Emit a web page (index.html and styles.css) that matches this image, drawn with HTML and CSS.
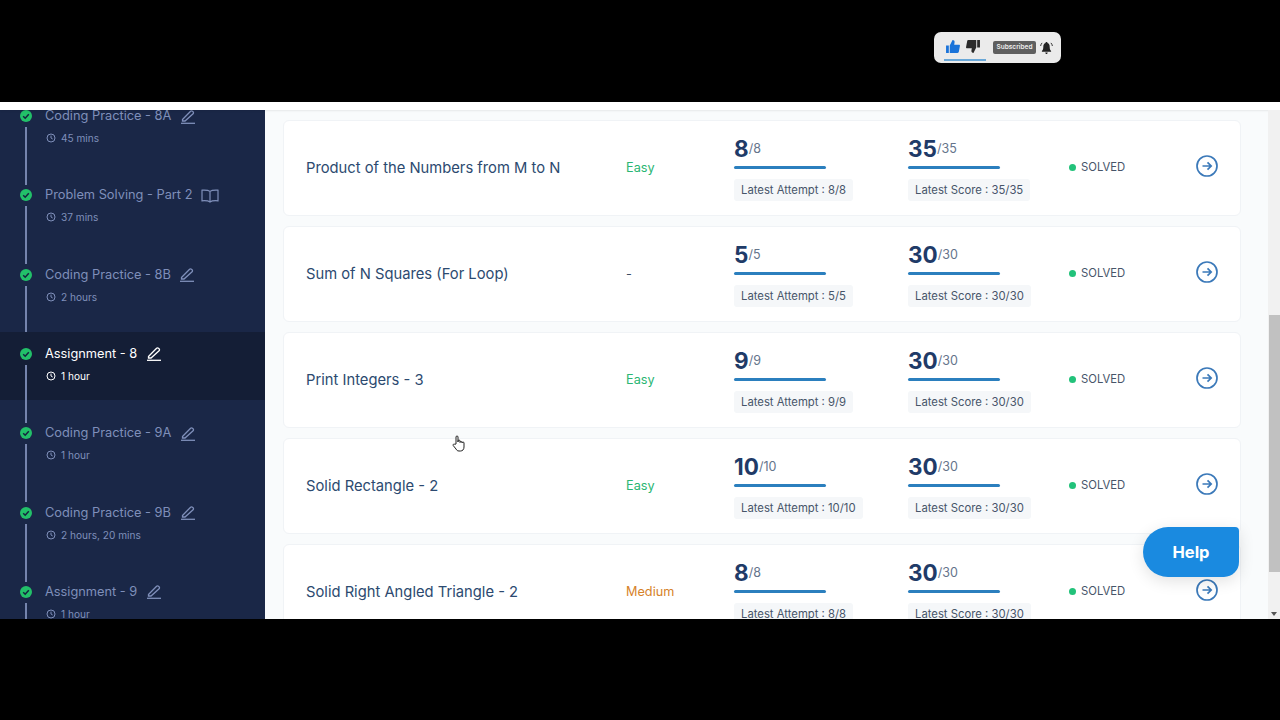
FILE: index.html
```html
<!DOCTYPE html>
<html lang="en">
<head>
    <meta charset="UTF-8">
    <title>Assignment - 8</title>
    <link rel="stylesheet" href="styles.css">
</head>
<body>
    <svg class="icon-defs" width="0" height="0">
        <symbol id="i-check" viewBox="0 0 12 12">
            <circle cx="6" cy="6" r="6" fill="#22c069"/>
            <path d="M3.2 6.2l2 2 3.6-4" fill="none" stroke="#14233f" stroke-width="1.5"/>
        </symbol>
        <symbol id="i-clock" viewBox="0 0 10 10">
            <circle cx="5" cy="5" r="4" fill="none" stroke="currentColor" stroke-width="1"/>
            <path d="M5 2.6V5l1.7 1" fill="none" stroke="currentColor" stroke-width="1"/>
        </symbol>
        <symbol id="i-edit" viewBox="0 0 16 15">
            <path d="M2.500 10.500L10.600 2.200a1.300 1.300 0 0 1 1.900 0l.6.6a1.300 1.300 0 0 1 0 1.900L5 12H2.500z" fill="none" stroke="currentColor" stroke-width="1.300"/>
            <path d="M1 14.300h14" stroke="currentColor" stroke-width="1.300"/>
        </symbol>
        <symbol id="i-book" viewBox="0 0 18 14">
            <path d="M9 2.400C7.500 1.200 4 1 1 1.200v10.600c3-.2 6.500 0 8 1.200 1.500-1.200 5-1.400 8-1.200V1.200C14 1 10.500 1.200 9 2.400zM9 2.400V13" fill="none" stroke="currentColor" stroke-width="1.200"/>
        </symbol>
        <symbol id="i-arrow" viewBox="0 0 22 22">
            <circle cx="11" cy="11" r="10" fill="none" stroke="#3b79b9" stroke-width="1.700"/>
            <path d="M6.500 11h8.500M11.500 7.300l3.700 3.700-3.700 3.700" fill="none" stroke="#3b79b9" stroke-width="1.700"/>
        </symbol>
    </svg>

    <div class="top-band">
        <div class="sub-pill">
            <div class="reactions">
                <svg width="14" height="13" viewBox="0 0 15 14"><path d="M0 6h3v8H0zM4 6l3-6c1.500 0 2.400 1 2.200 2.400L8.800 5H14c.7 0 1.100.6 1 1.300l-1.200 6.400c-.1.700-.7 1.300-1.400 1.300H4z" fill="#1a73d9"/></svg>
                <svg width="14" height="13" viewBox="0 0 15 14"><path d="M15 8h-3V0h3zM11 8l-3 6c-1.500 0-2.400-1-2.200-2.400L6.200 9H1C.3 9-.1 8.400 0 7.700L1.200 1.300C1.300.6 1.900 0 2.600 0H11z" fill="#2b2b2b"/></svg>
            </div>
            <span class="sub-badge">Subscribed</span>
            <svg width="13" height="14" viewBox="0 0 13 14">
                <path d="M6.500 1c-.6 0-1 .4-1 1C3.900 2.500 3.300 4 3.300 6c0 2-.5 3-1.400 4v.8h9.200V10c-.9-1-1.400-2-1.400-4 0-2-.6-3.500-2.200-4 0-.6-.4-1-1-1zM5.300 11.500h2.400c0 .8-.5 1.500-1.200 1.500s-1.200-.7-1.200-1.500z" fill="#222"/>
                <path d="M.6 5C.8 3.700 1.300 2.700 2.100 1.900M12.400 5c-.2-1.300-.7-2.300-1.500-3.100" fill="none" stroke="#222" stroke-width=".9"/>
            </svg>
        </div>
    </div>

    <div class="app">
        <div class="app-strip"></div>
        <div class="app-main">
            <aside class="sidebar">
                <div class="course-list">
                    <div class="course">
                        <div class="track"><svg class="dot"><use href="#i-check"/></svg><span class="line"></span></div>
                        <div>
                            <div class="course-title">Coding Practice - 8A <svg class="ic-edit"><use href="#i-edit"/></svg></div>
                            <div class="course-time"><svg class="ic-clock"><use href="#i-clock"/></svg>45 mins</div>
                        </div>
                    </div>
                    <div class="course">
                        <div class="track"><svg class="dot"><use href="#i-check"/></svg><span class="line"></span></div>
                        <div>
                            <div class="course-title">Problem Solving - Part 2 <svg class="ic-book"><use href="#i-book"/></svg></div>
                            <div class="course-time"><svg class="ic-clock"><use href="#i-clock"/></svg>37 mins</div>
                        </div>
                    </div>
                    <div class="course">
                        <div class="track"><svg class="dot"><use href="#i-check"/></svg><span class="line"></span></div>
                        <div>
                            <div class="course-title">Coding Practice - 8B <svg class="ic-edit"><use href="#i-edit"/></svg></div>
                            <div class="course-time"><svg class="ic-clock"><use href="#i-clock"/></svg>2 hours</div>
                        </div>
                    </div>
                    <div class="course active">
                        <div class="track"><svg class="dot"><use href="#i-check"/></svg><span class="line"></span></div>
                        <div>
                            <div class="course-title">Assignment - 8 <svg class="ic-edit"><use href="#i-edit"/></svg></div>
                            <div class="course-time"><svg class="ic-clock"><use href="#i-clock"/></svg>1 hour</div>
                        </div>
                    </div>
                    <div class="course">
                        <div class="track"><svg class="dot"><use href="#i-check"/></svg><span class="line"></span></div>
                        <div>
                            <div class="course-title">Coding Practice - 9A <svg class="ic-edit"><use href="#i-edit"/></svg></div>
                            <div class="course-time"><svg class="ic-clock"><use href="#i-clock"/></svg>1 hour</div>
                        </div>
                    </div>
                    <div class="course">
                        <div class="track"><svg class="dot"><use href="#i-check"/></svg><span class="line"></span></div>
                        <div>
                            <div class="course-title">Coding Practice - 9B <svg class="ic-edit"><use href="#i-edit"/></svg></div>
                            <div class="course-time"><svg class="ic-clock"><use href="#i-clock"/></svg>2 hours, 20 mins</div>
                        </div>
                    </div>
                    <div class="course">
                        <div class="track"><svg class="dot"><use href="#i-check"/></svg><span class="line"></span></div>
                        <div>
                            <div class="course-title">Assignment - 9 <svg class="ic-edit"><use href="#i-edit"/></svg></div>
                            <div class="course-time"><svg class="ic-clock"><use href="#i-clock"/></svg>1 hour</div>
                        </div>
                    </div>
                </div>
            </aside>

            <main class="questions">
                <div class="card">
                    <div class="q-name">Product of the Numbers from M to N</div>
                    <div class="q-level easy">Easy</div>
                    <div class="stat">
                        <div class="stat-num"><b>8</b>/8</div>
                        <div class="stat-bar"></div>
                        <div class="stat-note">Latest Attempt : 8/8</div>
                    </div>
                    <div class="stat">
                        <div class="stat-num"><b>35</b>/35</div>
                        <div class="stat-bar"></div>
                        <div class="stat-note">Latest Score : 35/35</div>
                    </div>
                    <div class="status"><span class="status-dot"></span>SOLVED</div>
                    <svg class="go"><use href="#i-arrow"/></svg>
                </div>
                <div class="card">
                    <div class="q-name">Sum of N Squares (For Loop)</div>
                    <div class="q-level">-</div>
                    <div class="stat">
                        <div class="stat-num"><b>5</b>/5</div>
                        <div class="stat-bar"></div>
                        <div class="stat-note">Latest Attempt : 5/5</div>
                    </div>
                    <div class="stat">
                        <div class="stat-num"><b>30</b>/30</div>
                        <div class="stat-bar"></div>
                        <div class="stat-note">Latest Score : 30/30</div>
                    </div>
                    <div class="status"><span class="status-dot"></span>SOLVED</div>
                    <svg class="go"><use href="#i-arrow"/></svg>
                </div>
                <div class="card">
                    <div class="q-name">Print Integers - 3</div>
                    <div class="q-level easy">Easy</div>
                    <div class="stat">
                        <div class="stat-num"><b>9</b>/9</div>
                        <div class="stat-bar"></div>
                        <div class="stat-note">Latest Attempt : 9/9</div>
                    </div>
                    <div class="stat">
                        <div class="stat-num"><b>30</b>/30</div>
                        <div class="stat-bar"></div>
                        <div class="stat-note">Latest Score : 30/30</div>
                    </div>
                    <div class="status"><span class="status-dot"></span>SOLVED</div>
                    <svg class="go"><use href="#i-arrow"/></svg>
                </div>
                <div class="card">
                    <div class="q-name">Solid Rectangle - 2</div>
                    <div class="q-level easy">Easy</div>
                    <div class="stat">
                        <div class="stat-num"><b>10</b>/10</div>
                        <div class="stat-bar"></div>
                        <div class="stat-note">Latest Attempt : 10/10</div>
                    </div>
                    <div class="stat">
                        <div class="stat-num"><b>30</b>/30</div>
                        <div class="stat-bar"></div>
                        <div class="stat-note">Latest Score : 30/30</div>
                    </div>
                    <div class="status"><span class="status-dot"></span>SOLVED</div>
                    <svg class="go"><use href="#i-arrow"/></svg>
                </div>
                <div class="card">
                    <div class="q-name">Solid Right Angled Triangle - 2</div>
                    <div class="q-level medium">Medium</div>
                    <div class="stat">
                        <div class="stat-num"><b>8</b>/8</div>
                        <div class="stat-bar"></div>
                        <div class="stat-note">Latest Attempt : 8/8</div>
                    </div>
                    <div class="stat">
                        <div class="stat-num"><b>30</b>/30</div>
                        <div class="stat-bar"></div>
                        <div class="stat-note">Latest Score : 30/30</div>
                    </div>
                    <div class="status"><span class="status-dot"></span>SOLVED</div>
                    <svg class="go"><use href="#i-arrow"/></svg>
                </div>
            </main>

            <div class="scrollbar">
                <div class="scroll-thumb"></div>
                <span class="scroll-down"></span>
            </div>
        </div>

        <button class="help-btn">Help</button>
        <svg class="hand" width="13" height="17" viewBox="0 0 13 17">
            <path d="M4 9V2a1 1 0 0 1 2 0v5V6a1 1 0 0 1 2 0v1.500a1 1 0 0 1 2 0V8a1 1 0 0 1 2 0v4c0 2.500-1.500 4-3.500 4H7c-1.500 0-2.300-.7-3-2L1.200 10.500c-.6-1 .8-2 1.600-1.200z" fill="#fff" stroke="#222" stroke-width="1"/>
        </svg>
    </div>
</body>
</html>
```

FILE: styles.css
```css
* {
    box-sizing: border-box;
}
html, body {
    height: 100%;
}
body {
    margin: 0;
    background: #000;
    font-family: Inter, "Noto Sans", sans-serif;
    overflow: hidden;
}
.icon-defs {
    position: absolute;
}
.top-band {
    height: 102px;
    position: relative;
}
.sub-pill {
    position: absolute;
    left: 934px;
    top: 32px;
    width: 127px;
    height: 31px;
    background: #ebebeb;
    border-radius: 7px;
    display: flex;
    align-items: center;
    padding-left: 10px;
}
.reactions {
    width: 42px;
    height: 25px;
    margin-top: 2px;
    display: flex;
    align-items: center;
    gap: 6px;
    padding: 0 0 2px 2px;
    border-bottom: 2px solid #6aa8d8;
}
.sub-badge {
    margin-left: 7px;
    width: 43px;
    height: 13px;
    background: #5f5f5f;
    color: #eee;
    border-radius: 2px;
    font-size: 6.500px;
    font-weight: 600;
    line-height: 13px;
    text-align: center;
}
.sub-pill > svg {
    margin-left: 4px;
}

.app {
    position: relative;
    height: 517px;
    background: #fff;
}
.app-strip {
    height: 8px;
    background: #fff;
    box-shadow: 0 1px 2px rgba(0, 0, 0, 0.08);
    position: relative;
}
.app-main {
    display: flex;
    height: 509px;
    overflow: hidden;
}

/* left course list */
.sidebar {
    width: 265px;
    flex-shrink: 0;
    background: #1a2747;
    overflow: hidden;
}
.course-list {
    margin-top: -16px;
    display: flex;
    flex-direction: column;
    gap: 11.330px;
}
.course {
    height: 68px;
    flex-shrink: 0;
    display: flex;
    color: #7f8fba;
}
.course.active {
    background: #141e36;
    color: #fff;
}
.track {
    width: 45px;
    padding: 16px 0 0 20px;
    flex-shrink: 0;
}
.dot {
    display: block;
    width: 12px;
    height: 12px;
}
.line {
    display: block;
    width: 2px;
    height: 58px;
    margin: 5px 0 0 5px;
    background: #7584ad;
}
.course-title {
    margin-top: 14px;
    font-size: 12.800px;
    line-height: 16px;
    display: flex;
    align-items: center;
    white-space: pre;
}
.course-time {
    margin-top: 7px;
    font-size: 10.100px;
    line-height: 14px;
    display: flex;
    align-items: center;
}
.ic-edit {
    width: 16px;
    height: 15px;
    margin-left: 5px;
}
.ic-book {
    width: 18px;
    height: 14px;
    margin: 2px 0 0 5px;
}
.ic-clock {
    width: 10px;
    height: 10px;
    margin: 0 5px 0 1px;
}

/* question cards */
.questions {
    flex: 1;
    background: #f9fbfc;
    padding: 10px 27px 0 18px;
    display: flex;
    flex-direction: column;
    gap: 10px;
    overflow: hidden;
}
.card {
    flex-shrink: 0;
    height: 96px;
    background: #fff;
    border: 1px solid #f0f3f6;
    border-radius: 6px;
    padding: 0 0 2px 22px;
    display: grid;
    grid-template-columns: 320px 108px 174px 161px 127px 22px;
    align-items: center;
}
.q-name {
    margin-top: 2px;
    font-size: 14.750px;
    color: #2c4a70;
}
.q-level {
    font-size: 12.700px;
    color: #3d4d63;
}
.q-level.easy {
    color: #2bb673;
}
.q-level.medium {
    color: #d6822a;
}
.stat {
    display: flex;
    flex-direction: column;
    align-items: flex-start;
    margin-top: 2px;
}
.stat-num {
    font-size: 12.500px;
    height: 28px;
    display: flex;
    align-items: center;
    color: #64748b;
}
.stat-num b {
    font-size: 22.500px;
    font-weight: 700;
    color: #1f3b68;
}
.stat-bar {
    width: 92px;
    height: 3px;
    margin-top: 4px;
    background: #2b7fbe;
    border-radius: 2px;
}
.stat-note {
    margin: 10px 0 1px;
    padding: 0 7px;
    height: 22px;
    line-height: 22px;
    background: #f5f7f9;
    border-radius: 3px;
    font-size: 11.300px;
    color: #475569;
}
.status {
    font-size: 11.300px;
    color: #475569;
    display: flex;
    align-items: center;
}
.status-dot {
    width: 7px;
    height: 7px;
    border-radius: 50%;
    background: #22c27a;
    margin-right: 5px;
}
.go {
    width: 22px;
    height: 22px;
    margin-top: -2px;
}

.scrollbar {
    width: 12px;
    flex-shrink: 0;
    background: #f1f1f1;
    position: relative;
    padding: 205px 0 0 1px;
}
.scroll-thumb {
    height: 257px;
    background: #c1c1c1;
}
.scroll-down {
    position: absolute;
    left: 3px;
    bottom: 3px;
    border: 3px solid transparent;
    border-top: 4px solid #555;
    border-bottom: 0;
}

/* floating bits */
.help-btn {
    position: absolute;
    left: 1143px;
    top: 425px;
    width: 96px;
    height: 50px;
    border: 0;
    border-radius: 25px 4px 15px 25px;
    background: #1a8ae0;
    color: #fff;
    font-family: inherit;
    font-size: 16.500px;
    font-weight: 700;
    box-shadow: 0 4px 16px rgba(0, 0, 0, 0.12);
}
.hand {
    position: absolute;
    left: 452px;
    top: 333px;
}
```
